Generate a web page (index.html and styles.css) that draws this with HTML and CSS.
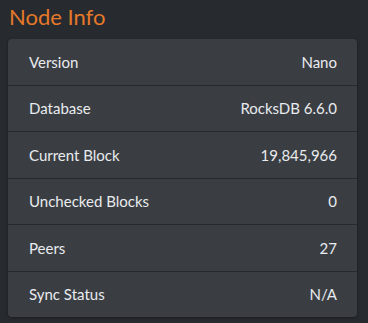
FILE: index.html
```html
<!DOCTYPE html>
<html>
<head>
<meta charset="utf-8">
<link rel="stylesheet" href="styles.css">
</head>
<body>
<div class="panel">
  <h1 class="title">Node Info</h1>
  <div class="card">
    <div class="row"><span class="label">Version</span><span class="value">Nano</span></div>
    <div class="row"><span class="label">Database</span><span class="value">RocksDB 6.6.0</span></div>
    <div class="row"><span class="label">Current Block</span><span class="value">19,845,966</span></div>
    <div class="row"><span class="label">Unchecked Blocks</span><span class="value">0</span></div>
    <div class="row"><span class="label">Peers</span><span class="value">27</span></div>
    <div class="row"><span class="label">Sync Status</span><span class="value">N/A</span></div>
  </div>
</div>
</body>
</html>
```
FILE: styles.css
```css
html, body {
  margin: 0;
  padding: 0;
  background: #272a2f;
  height: 100%;
}
body {
  font-family: Lato, "Noto Sans", sans-serif;
  color: #e9ebee;
}
.panel {
  padding: 0 11px 0 8px;
}
.title {
  margin: 0;
  padding: 3px 0 0 1px;
  height: 36px;
  box-sizing: border-box;
  font-size: 22px;
  font-weight: 400;
  line-height: 28px;
  color: #e5792a;
}
.card {
  background: #3a3e43;
  border-radius: 4px;
  box-shadow: 0 1px 3px rgba(0,0,0,0.35);
  width: 349px;
  margin-top: 3px;
}
.row {
  display: flex;
  justify-content: space-between;
  align-items: center;
  height: 45.5px;
  padding: 0 20px 0 21px;
  font-size: 15px;
  border-bottom: 1px solid #26292d;
}
.row:last-child {
  border-bottom: none;
}
```
